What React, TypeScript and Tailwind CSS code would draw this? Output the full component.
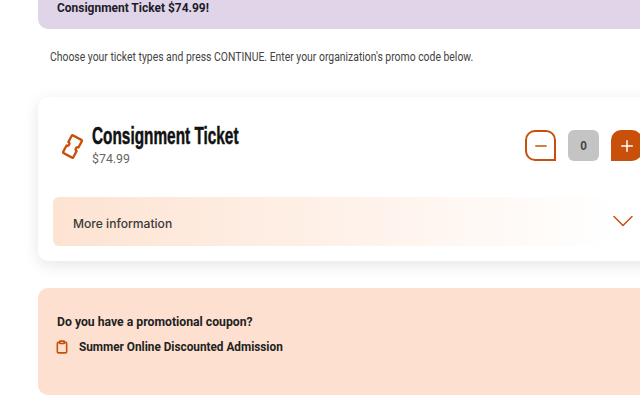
import { Minus, Plus, ChevronDown, Clipboard } from "lucide-react";

const barlow = "font-['Roboto','Liberation_Sans',sans-serif] block w-fit origin-left whitespace-nowrap";

function TicketIcon() {
  return (
    <svg viewBox="0 0 24 24" fill="none" stroke="#c8500a" strokeWidth={2.4} strokeLinejoin="round" className="mb-[2px] size-[23px] shrink-0 rotate-[28deg]">
      <path d="M7 1.5h10a1 1 0 0 1 1 1v7.5a2 2 0 0 0 0 4v7.5a1 1 0 0 1-1 1H7a1 1 0 0 1-1-1V14a2 2 0 0 0 0-4V2.5a1 1 0 0 1 1-1z" />
    </svg>
  );
}

function TicketCard() {
  return (
    <section className="mt-[32px] h-[164px] rounded-[10px] bg-white pt-[31px] shadow-[0_4px_16px_rgba(0,0,0,0.1)]">
      <div className="flex h-[38px] items-center pr-[36px] pl-[23px]">
        <TicketIcon />
        <div className="ml-[8px]">
          <h2 className="-mt-[3px] mb-[3px] origin-left scale-x-[0.64] font-['Liberation_Sans',sans-serif] text-[24px] leading-[24px] font-bold whitespace-nowrap text-[#111] [-webkit-text-stroke:0.5px_#111]">
            Consignment Ticket
          </h2>
          <p className={`${barlow} text-[13px] leading-[16px] text-[#666] scale-x-[0.95]`}>$74.99</p>
        </div>
        <div className="mb-[3px] ml-auto flex shrink-0 items-center gap-[12px]">
          <button className="flex size-[31px] items-center justify-center rounded-[10px] rounded-br-none border-2 border-[#c8500a] text-[#c8500a]">
            <Minus className="size-[18px]" strokeWidth={1.75} />
          </button>
          <span className="flex size-[31px] items-center justify-center rounded-[6px] bg-[#c4c4c4] font-['Liberation_Sans',sans-serif] text-[12px] font-bold text-[#444]">
            0
          </span>
          <button className="flex size-[31px] shrink-0 items-center justify-center rounded-[10px] rounded-bl-none bg-[#c8500a] text-white">
            <Plus className="size-[18px]" strokeWidth={2} />
          </button>
        </div>
      </div>
      <div className="mt-[31px] ml-[15px] flex h-[49px] items-center justify-between rounded-[6px] bg-gradient-to-r from-[#fde3d2] to-white to-90% pr-[37px] pl-[20px]">
        <span className="mt-[5px] font-['Inter',sans-serif] text-[12.1px] font-medium text-[#3a3a3a]">More information</span>
        <ChevronDown className="-mt-[1px] size-[36px] text-[#c8500a]" strokeWidth={1} />
      </div>
    </section>
  );
}

function App() {
  return (
    <div className="h-[418px] w-[640px] overflow-hidden bg-white pl-[38px]">
      <div className="w-[640px]">
        <div className="flex h-[29px] items-start rounded-b-[10px] bg-[#e0d5e8] pl-[19px]">
          <p className={`${barlow} scale-x-[0.92] text-[13px] leading-[15px] font-bold text-[#1c1c28]`}>Consignment Ticket $74.99!</p>
        </div>
        <p className={`${barlow} mt-[20px] ml-[12px] scale-x-[0.8] text-[13px] leading-[16px] text-[#444]`}>
          Choose your ticket types and press CONTINUE. Enter your organization's promo code below.
        </p>
        <TicketCard />
        <section className="mt-[27px] h-[107px] rounded-[10px] bg-[#fde0cf] pt-[26px] pl-[19px]">
          <p className={`${barlow} scale-x-[0.94] text-[13px] leading-[16px] font-bold text-[#222]`}>Do you have a promotional coupon?</p>
          <div className="mt-[9px] -ml-[2px] flex items-center">
            <Clipboard className="size-[14px] shrink-0 text-[#c8500a]" strokeWidth={2.75} />
            <span className={`${barlow} ml-[10px] scale-x-[0.906] text-[13px] leading-[16px] font-bold text-[#222]`}>Summer Online Discounted Admission</span>
          </div>
        </section>
      </div>
    </div>
  );
}

export default App;
